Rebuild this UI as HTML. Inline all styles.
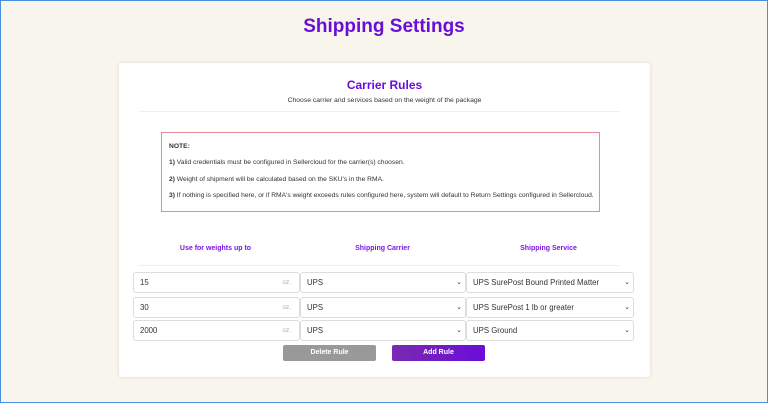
<!DOCTYPE html>
<html><head><style>
*{box-sizing:border-box;margin:0;padding:0}
body{width:768px;height:403px;background:#f8f6ec;font-family:"Liberation Sans",sans-serif;position:relative;overflow:hidden;border:1px solid #4a90e2}
.t{position:absolute;left:0;width:766px;text-align:center;top:15px;font-size:19px;font-weight:bold;color:#6a0dd9}
.card{position:absolute;left:118px;top:62px;width:531px;height:314px;background:#fff;border-radius:3px;box-shadow:0 0 3px rgba(0,0,0,.12)}
.a{position:absolute}
.h{color:#7a16e0;font-weight:bold;font-size:7px;text-align:center}
.note{position:absolute;left:42px;top:69px;width:439px;height:80px;border:1px solid #e88a98;font-size:6.7px;color:#333;padding:10px 7px 0}
.note p{margin-bottom:8.6px;line-height:7.8px;white-space:nowrap}
.f{position:absolute;height:21px;border:1px solid #ddd;border-radius:3px;font-size:7.8px;color:#333;padding:0 6px;line-height:19px}
.f .u{position:absolute;right:8px;color:#aaa;font-size:6.5px}
.f .c{position:absolute;right:3px;font-size:7px;color:#333}
.b{position:absolute;top:282px;height:16px;width:93px;color:#fff;font-weight:bold;font-size:7px;text-align:center;line-height:15px;border-radius:2px}
</style></head><body>
<div class="t">Shipping Settings</div>
<div class="card">
<div class="a" style="left:0;width:531px;top:15px;text-align:center;font-size:12px;font-weight:bold;color:#6a0dd9">Carrier Rules</div>
<div class="a" style="left:0;width:531px;top:34px;text-align:center;font-size:6.8px;color:#333">Choose carrier and services based on the weight of the package</div>
<div class="a" style="left:20px;width:481px;top:48px;border-top:1px solid #eee"></div>
<div class="note"><p><b>NOTE:</b></p><p><b>1)</b> Valid credentials must be configured in Sellercloud for the carrier(s) choosen.</p><p><b>2)</b> Weight of shipment will be calculated based on the SKU's in the RMA.</p><p><b>3)</b> If nothing is specified here, or if RMA's weight exceeds rules configured here, system will default to Return Settings configured in Sellercloud.</p></div>
<div class="a h" style="left:14px;width:165px;top:182px">Use for weights up to</div>
<div class="a h" style="left:181px;width:165px;top:182px">Shipping Carrier</div>
<div class="a h" style="left:347px;width:165px;top:182px">Shipping Service</div>
<div class="a" style="left:20px;width:481px;top:202px;border-top:1px solid #eee"></div>
<div class="f" style="left:14px;top:209px;width:167px">15<span class="u">oz.</span></div>
<div class="f" style="left:181px;top:209px;width:166px">UPS<span class="c">⌄</span></div>
<div class="f" style="left:347px;top:209px;width:168px">UPS SurePost Bound Printed Matter<span class="c">⌄</span></div>
<div class="f" style="left:14px;top:234px;width:167px">30<span class="u">oz.</span></div>
<div class="f" style="left:181px;top:234px;width:166px">UPS<span class="c">⌄</span></div>
<div class="f" style="left:347px;top:234px;width:168px">UPS SurePost 1 lb or greater<span class="c">⌄</span></div>
<div class="f" style="left:14px;top:257px;width:167px">2000<span class="u">oz.</span></div>
<div class="f" style="left:181px;top:257px;width:166px">UPS<span class="c">⌄</span></div>
<div class="f" style="left:347px;top:257px;width:168px">UPS Ground<span class="c">⌄</span></div>
<div class="b" style="left:164px;background:#999">Delete Rule</div>
<div class="b" style="left:273px;background:linear-gradient(90deg,#7a2ab0,#6a0dd9)">Add Rule</div>
</div>
</body></html>
